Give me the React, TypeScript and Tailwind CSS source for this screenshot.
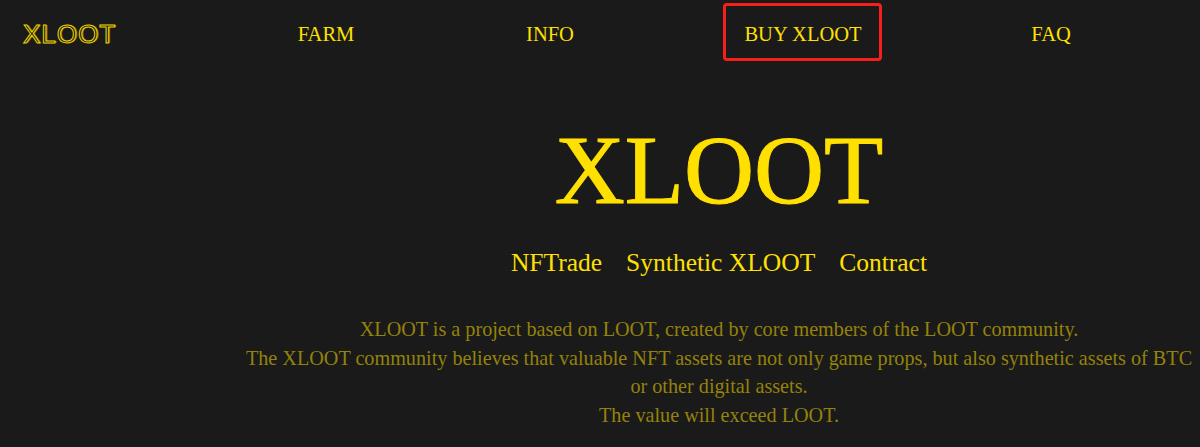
const navItems = [
  { label: "FARM", width: "w-[224px]" },
  { label: "INFO", width: "w-[224px]" },
  { label: "BUY XLOOT", width: "w-[280px]", boxed: true },
  { label: "FAQ", width: "w-[218px]" },
];

const links = ["NFTrade", "Synthetic XLOOT", "Contract"];

export default function App() {
  return (
    <div className="h-[447px] w-[1200px] overflow-hidden bg-[#1a1a1a] font-['Liberation_Serif',serif] text-[#ffe000]">
      <header className="flex h-[64px] items-center pl-[23px]">
        <div className="w-[191px] pt-[4px] font-['Liberation_Sans',sans-serif] text-[26px] leading-none tracking-[1px] text-[#1a1a1a] [-webkit-text-stroke:1px_#f0d400] [text-shadow:1.5px_0_#8a7a00]">
          XLOOT
        </div>
        {navItems.map((item) => (
          <div key={item.label} className={`flex justify-center ${item.width}`}>
            <a
              className={
                item.boxed
                  ? "flex h-[58px] w-[159px] items-center justify-center rounded-[4px] border-[3px] border-[#f5201a] pt-[4px] pl-[2px] text-[20.5px] leading-none"
                  : "pt-[5px] text-[20.5px] leading-none"
              }
            >
              {item.label}
            </a>
          </div>
        ))}
      </header>

      <main className="flex flex-col items-center pl-[238px] pt-[57px]">
        <h1 className="text-[97px] leading-[100px] [-webkit-text-stroke:1px_#ffe000]">XLOOT</h1>
        <div className="mt-[26px] flex gap-[24px] text-[25.5px] leading-[32px]">
          {links.map((link) => (
            <a key={link}>{link}</a>
          ))}
        </div>
        <p className="mt-[36px] w-[958px] text-center text-[20.2px] leading-[28.5px] text-[#94820a]">
          XLOOT is a project based on LOOT, created by core members of the LOOT community.
          <br />
          The XLOOT community believes that valuable NFT assets are not only game props, but also synthetic assets of BTC or other digital assets.
          <br />
          The value will exceed LOOT.
        </p>
      </main>
    </div>
  );
}
